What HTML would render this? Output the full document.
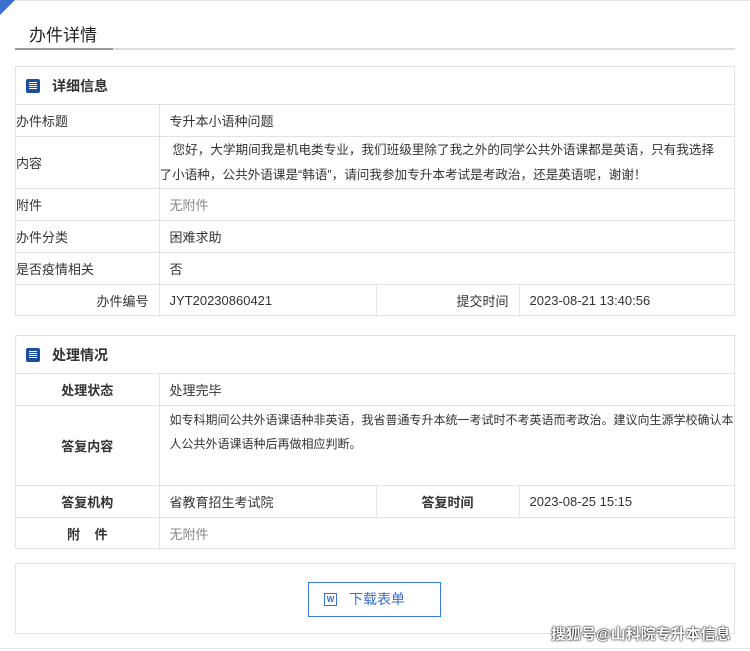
<!DOCTYPE html>
<html><head><meta charset="utf-8"><style>
body{margin:0;width:750px;height:651px;background:#fff;font-family:"Liberation Sans","Noto Sans CJK SC",sans-serif;font-size:13px;color:#333;position:relative;overflow:hidden}
.a{position:absolute}
.panel{position:absolute;left:15px;width:720px;border:1px solid #e3e3e3;box-sizing:border-box}
table{border-collapse:collapse;width:100%;table-layout:fixed}
td{border-top:1px solid #e3e3e3;border-left:1px solid #e3e3e3;padding:0 10px;height:32px;vertical-align:middle;box-sizing:border-box}
td:first-child{border-left:none}
.hd{height:37px;font-weight:bold;font-size:14px;display:flex;align-items:center;padding-left:10px}
.ic{width:14px;height:14px;background:#1a4fa0;border-radius:2px;margin-right:12px;position:relative}
.ic:after{content:"";position:absolute;left:3px;top:3px;width:8px;height:8px;background:repeating-linear-gradient(#fff 0 1px,#1a4fa0 1px 2px)}
.lb{padding-left:0}
.c{text-align:center;font-weight:bold}
.g{color:#888}
</style></head><body>
<div class="a" style="left:0;top:0;width:750px;border-top:1px solid #e5e5e5"></div>
<div class="a" style="left:0;top:0;width:0;height:0;border-top:15px solid #3a6fd0;border-right:15px solid transparent"></div>
<div class="a" style="left:29px;top:21px;font-size:17px;color:#222">办件详情</div>
<div class="a" style="left:15px;top:48px;width:720px;height:2px;background:#ddd"></div>
<div class="a" style="left:15px;top:48px;width:98px;height:2px;background:#999"></div>

<div class="panel" style="top:66px;height:250px">
<div class="hd"><span class="ic"></span>详细信息</div>
<table><colgroup><col style="width:143px"><col style="width:217px"><col style="width:143px"><col></colgroup>
<tr><td class="lb">办件标题</td><td colspan="3">专升本小语种问题</td></tr>
<tr><td class="lb" style="height:52px">内容</td><td colspan="3" style="padding:0 8px 0 0;line-height:25px;font-size:12.6px;text-indent:13px">您好，大学期间我是机电类专业，我们班级里除了我之外的同学公共外语课都是英语，只有我选择了小语种，公共外语课是“韩语”，请问我参加专升本考试是考政治，还是英语呢，谢谢！</td></tr>
<tr><td class="lb">附件</td><td colspan="3" class="g">无附件</td></tr>
<tr><td class="lb">办件分类</td><td colspan="3">困难求助</td></tr>
<tr><td class="lb">是否疫情相关</td><td colspan="3">否</td></tr>
<tr><td style="text-align:right">办件编号</td><td>JYT20230860421</td><td style="text-align:right">提交时间</td><td>2023-08-21 13:40:56</td></tr>
</table></div>

<div class="panel" style="top:335px;height:214px">
<div class="hd"><span class="ic"></span>处理情况</div>
<table><colgroup><col style="width:143px"><col style="width:217px"><col style="width:143px"><col></colgroup>
<tr><td class="c">处理状态</td><td colspan="3">处理完毕</td></tr>
<tr><td class="c" style="height:80px">答复内容</td><td colspan="3" style="vertical-align:top;font-size:12px;line-height:24px;padding:2px 0 0 10px">如专科期间公共外语课语种非英语，我省普通专升本统一考试时不考英语而考政治。建议向生源学校确认本人公共外语课语种后再做相应判断。</td></tr>
<tr><td class="c">答复机构</td><td>省教育招生考试院</td><td class="c">答复时间</td><td>2023-08-25 15:15</td></tr>
<tr><td class="c">附&nbsp;&nbsp;&nbsp;&nbsp;件</td><td colspan="3" class="g">无附件</td></tr>
</table></div>

<div class="panel" style="top:563px;height:71px"></div>
<div class="a" style="left:308px;top:582px;width:131px;height:33px;border:1px solid #3a7bd5;color:#3a6fd0;font-size:14px;line-height:33px">
<span style="position:absolute;left:15px;top:10px;width:11px;height:11px;border:1px solid #3a6fd0;font-size:8px;line-height:11px;text-align:center;font-weight:bold">W</span>
<span style="position:absolute;left:40px;top:0">下载表单</span></div>
<div class="a" style="left:0;top:648px;width:750px;border-top:1px solid #e5e5e5"></div>
<div class="a" style="left:551px;top:623px;color:#fff;font-size:15px;font-weight:bold;text-shadow:0 0 2px #000,0 0 1px #000">搜狐号@山科院专升本信息</div>
</body></html>
